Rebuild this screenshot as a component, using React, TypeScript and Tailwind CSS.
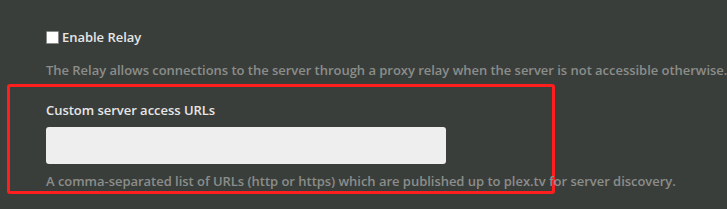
import React from 'react';

const App = () => {
  return (
    <div
      className="h-[209px] w-[727px] overflow-hidden bg-[#3a3e3b] pt-[28px] text-[13px] font-semibold leading-[18px] tracking-[-0.03px]"
      style={{ fontFamily: '"Open Sans", "Liberation Sans", sans-serif' }}
    >
      {/* Enable Relay */}
      <div className="pl-[46px]">
        <label className="flex items-center gap-[3px] text-[#e6e6e6]">
          <span className="h-[13px] w-[13px] rounded-[1px] border border-[#8a8a8a] bg-white" />
          <span>Enable Relay</span>
        </label>
        <p className="mt-[15px] whitespace-nowrap text-[#8b8d8a]">
          The Relay allows connections to the server through a proxy relay when the server is not accessible otherwise.
        </p>
      </div>

      {/* Custom URLs (highlighted) */}
      <div className="ml-[7px] mt-[5px] w-[548px] rounded-[3px] border-[3px] border-[#ff1f1f] pb-[1px] pl-[36px] pt-[14px]">
        <div className="text-[#e6e6e6]">Custom server access URLs</div>
        <input
          type="text"
          className="mt-[8px] block h-[37px] w-[400px] rounded-[3px] bg-[#eeeeee] outline-none"
        />
        <p className="mt-[8px] whitespace-nowrap text-[#8b8d8a]">
          A comma-separated list of URLs (http or https) which are published up to plex.tv for server discovery.
        </p>
      </div>
    </div>
  );
};

export default App;
